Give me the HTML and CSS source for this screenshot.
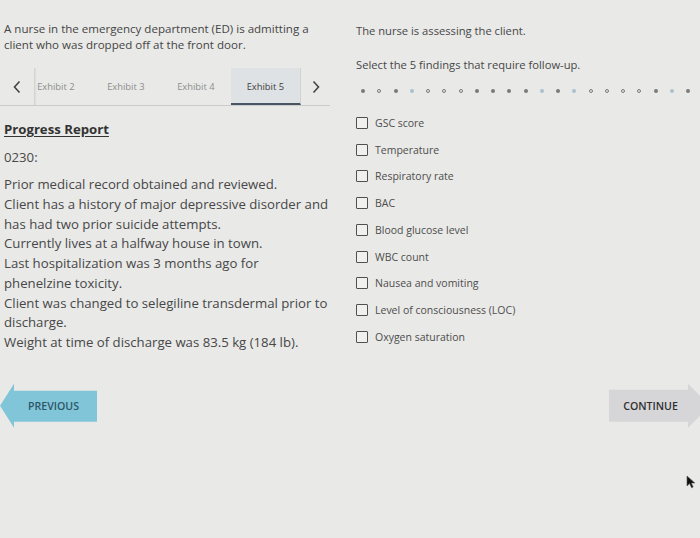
FILE: index.html
```html
<!DOCTYPE html>
<html lang="en">
<head>
<meta charset="utf-8">
<title>Exhibit 5 - Progress Report</title>
<link rel="stylesheet" href="styles.css">
</head>
<body>
<div class="page">
  <section class="left">
    <p class="intro">A nurse in the emergency department (ED) is admitting a client who was dropped off at the front door.</p>
    <nav class="tabs">
      <span class="chev">
        <svg width="10" height="14" viewBox="0 0 10 14"><path d="M7.5 1.5 L2.5 7 L7.5 12.5" fill="none" stroke="#444" stroke-width="1.6"/></svg>
      </span>
      <div class="strip">
        <div class="strip-inner">
          <span class="tab">Exhibit 2</span>
          <span class="tab">Exhibit 3</span>
          <span class="tab">Exhibit 4</span>
          <span class="tab active">Exhibit 5</span>
        </div>
      </div>
      <span class="chev">
        <svg width="10" height="14" viewBox="0 0 10 14"><path d="M2.5 1.5 L7.5 7 L2.5 12.5" fill="none" stroke="#444" stroke-width="1.6"/></svg>
      </span>
    </nav>
    <div class="report">
      <h2 class="title">Progress Report</h2>
      <p class="time">0230:</p>
      <p class="body">Prior medical record obtained and reviewed.<br>Client has a history of major depressive disorder and<br>has had two prior suicide attempts.<br>Currently lives at a halfway house in town.<br>Last hospitalization was 3 months ago for<br>phenelzine toxicity.<br>Client was changed to selegiline transdermal prior to<br>discharge.<br>Weight at time of discharge was 83.5 kg (184 lb).</p>
    </div>
  </section>
  <section class="right">
    <p class="prompt">The nurse is assessing the client.</p>
    <p class="prompt second">Select the 5 findings that require follow-up.</p>
    <div class="dots">
      <span class="dot f"></span><span class="dot r"></span><span class="dot f"></span><span class="dot b"></span><span class="dot r"></span><span class="dot r"></span><span class="dot r"></span><span class="dot f"></span><span class="dot f"></span><span class="dot f"></span><span class="dot f"></span><span class="dot b"></span><span class="dot f"></span><span class="dot b"></span><span class="dot r"></span><span class="dot r"></span><span class="dot r"></span><span class="dot r"></span><span class="dot f"></span><span class="dot b"></span><span class="dot f"></span>
    </div>
    <ul class="options">
      <li><span class="box"></span>GSC score</li>
      <li><span class="box"></span>Temperature</li>
      <li><span class="box"></span>Respiratory rate</li>
      <li><span class="box"></span>BAC</li>
      <li><span class="box"></span>Blood glucose level</li>
      <li><span class="box"></span>WBC count</li>
      <li><span class="box"></span>Nausea and vomiting</li>
      <li><span class="box"></span>Level of consciousness (LOC)</li>
      <li><span class="box"></span>Oxygen saturation</li>
    </ul>
  </section>
  <footer class="footer">
    <span class="btn prev">PREVIOUS</span>
    <span class="btn next">CONTINUE</span>
  </footer>
</div>
<svg class="cursor" width="12" height="14" viewBox="0 0 12 14"><path d="M1 1 L1 11 L3.6 8.6 L5.6 12.8 L7.2 12 L5.3 8 L8.8 8 Z" fill="#111" stroke="#555" stroke-width="0.6"/></svg>
</body>
</html>
```
FILE: styles.css
```css
html, body {
  margin: 0;
  padding: 0;
}
body {
  width: 700px;
  height: 538px;
  overflow: hidden;
  position: relative;
  background: #e9e9e7;
  font-family: "Open Sans", "DejaVu Sans", sans-serif;
  color: #4a4a4a;
}
.page {
  display: grid;
  grid-template-columns: 330px 1fr;
  column-gap: 26px;
  padding-top: 21px;
}
.left {
  padding-left: 4px;
}
.intro {
  margin: 0;
  font-size: 11.55px;
  line-height: 16px;
  color: #454545;
}
.tabs {
  margin: 15px 0 0 -4px;
  display: flex;
  align-items: stretch;
  height: 37px;
  border-bottom: 1px solid #cbcbcb;
}
.chev {
  width: 34px;
  display: flex;
  align-items: center;
  justify-content: center;
}
.chev:last-child {
  width: 28px;
}
.strip {
  width: 268px;
  overflow: hidden;
  border-left: 1.5px solid #d4d4d4;
  box-shadow: inset 2px 0 2px -1px #dcdcdc;
}
.strip-inner {
  display: flex;
  height: 100%;
  margin-left: -14px;
}
.tab {
  flex: 0 0 70px;
  display: flex;
  align-items: center;
  justify-content: center;
  font-size: 9.4px;
  color: #8d8d8d;
  box-sizing: border-box;
}
.tab.active {
  background: #dfe2e5;
  color: #3e3e3e;
  border-bottom: 2px solid #4a5563;
  border-right: 1px solid #d0d3d6;
  padding-top: 2px;
}
.report {
  margin-top: 13px;
}
.title {
  margin: 0;
  font-size: 13.2px;
  line-height: 20px;
  font-weight: 700;
  color: #333;
  text-decoration: underline;
  text-underline-offset: 2px;
}
.time {
  margin: 8px 0 0;
  font-size: 13.2px;
  line-height: 20px;
}
.body {
  margin: 8px 0 0;
  font-size: 13.2px;
  line-height: 19.75px;
  color: #474747;
  white-space: nowrap;
}
.right {
  padding-top: 2px;
}
.prompt {
  margin: 0;
  font-size: 11.2px;
  line-height: 16px;
  color: #474747;
}
.prompt.second {
  margin-top: 18px;
}
.dots {
  margin-top: 16px;
  padding-left: 5px;
  display: flex;
  gap: 12.25px;
  height: 4px;
}
.dot {
  width: 4px;
  height: 4px;
  border-radius: 50%;
  box-sizing: border-box;
  flex: 0 0 4px;
}
.dot.f { background: #7a7a7a; }
.dot.r { border: 1.3px solid #7a7a7a; }
.dot.b { background: #a9c2cf; }
.options {
  list-style: none;
  margin: 16.5px 0 0;
  padding: 0;
}
.options li {
  height: 26.75px;
  display: flex;
  align-items: center;
  gap: 7px;
  font-size: 10.5px;
  color: #4d4d4d;
}
.box {
  width: 12px;
  height: 12px;
  box-sizing: border-box;
  border: 1.6px solid #505050;
  border-radius: 1px;
  background: #f0f0ef;
}
.footer {
  grid-column: 1 / -1;
  display: flex;
  justify-content: space-between;
  margin-top: 31px;
  margin-right: -10px;
}
.btn {
  height: 44px;
  display: flex;
  align-items: center;
  justify-content: center;
  font-size: 10.6px;
  font-weight: 600;
}
.prev {
  width: 97px;
  padding-left: 10px;
  box-sizing: border-box;
  background: #80c6d8;
  color: #2f5566;
  clip-path: polygon(14px 0, 14px 7px, 97px 7px, 97px 38px, 14px 38px, 14px 44px, 0 22px);
}
.next {
  width: 101px;
  padding-right: 18px;
  box-sizing: border-box;
  background: #d6d6d8;
  color: #2f2f2f;
  clip-path: polygon(0 6px, 79px 6px, 79px 0, 101px 22px, 79px 44px, 79px 38px, 0 38px);
}
.cursor {
  position: absolute;
  left: 686px;
  top: 475px;
}
```
